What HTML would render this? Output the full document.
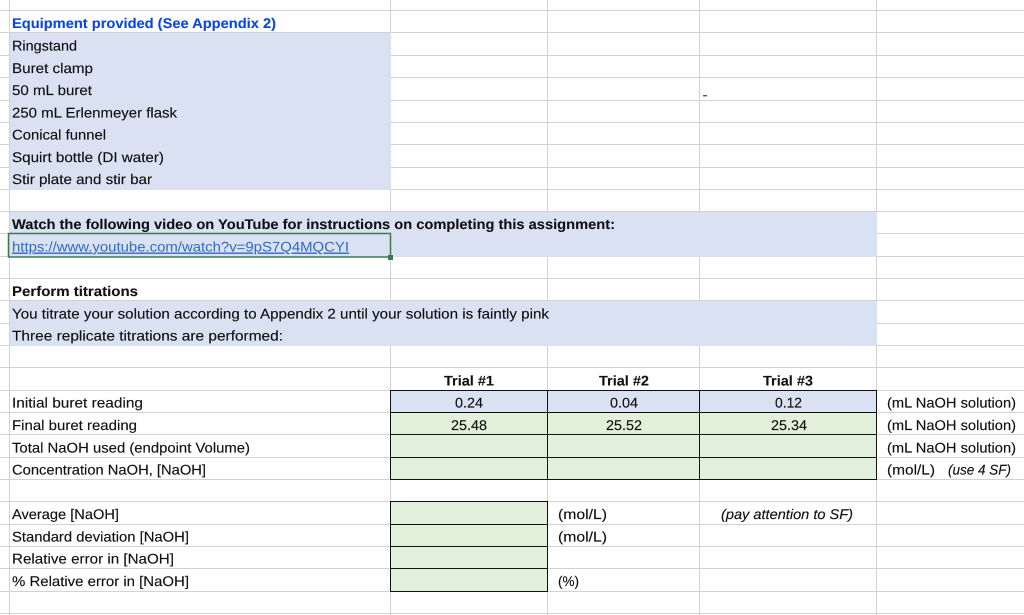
<!DOCTYPE html>
<html>
<head>
<meta charset="utf-8">
<style>
html,body{margin:0;padding:0;background:#fff;width:1024px;height:615px;overflow:hidden}
svg{display:block}
text{font-family:"Liberation Sans",sans-serif;font-size:14px;fill:#111;stroke:#111;stroke-width:.15px;text-rendering:geometricPrecision}
.b{font-weight:bold;stroke-width:.1px}
.i{font-style:italic}
</style>
</head>
<body>
<svg width="1024" height="615" viewBox="0 0 1024 615" xmlns="http://www.w3.org/2000/svg">
<!-- gridlines -->
<g stroke="#d2d2d2" stroke-width="1" shape-rendering="crispEdges">
<path d="M0 10.5H1024M0 32.5H1024M0 55.5H1024M0 77.5H1024M0 100.5H1024M0 122.5H1024M0 144.5H1024M0 167.5H1024M0 189.5H1024M0 211.5H1024M0 233.5H1024M0 256.5H1024M0 278.5H1024M0 300.5H1024M0 323.5H1024M0 345.5H1024M0 367.5H1024M0 390.5H1024M0 412.5H1024M0 434.5H1024M0 457.5H1024M0 479.5H1024M0 501.5H1024M0 524.5H1024M0 546.5H1024M0 568.5H1024M0 591.5H1024M0 613.5H1024"/>
<path d="M9.5 0V615M390.5 0V615M547.5 0V615M699.5 0V615M876.5 0V615"/>
</g>
<!-- blue fills -->
<g fill="#d9e1f2" shape-rendering="crispEdges">
<rect x="10" y="33" width="381" height="157"/>
<rect x="10" y="212" width="867" height="45"/>
<rect x="10" y="301" width="867" height="45"/>
<rect x="391" y="391" width="486" height="21"/>
</g>
<!-- green fills -->
<g fill="#e2efda" shape-rendering="crispEdges">
<rect x="391" y="413" width="486" height="66"/>
<rect x="391" y="502" width="157" height="89"/>
</g>
<!-- table borders -->
<g stroke="#111" stroke-width="1" fill="none" shape-rendering="crispEdges">
<path d="M390.5 390V480M547.5 390V480M699.5 390V480M876.5 390V480"/>
<path d="M390 390.5H877M390 412.5H877M390 434.5H877M390 457.5H877M390 479.5H877"/>
<path d="M390.5 501V592M547.5 501V592"/>
<path d="M390 501.5H548M390 524.5H548M390 546.5H548M390 568.5H548M390 591.5H548"/>
</g>
<!-- selection -->
<rect x="8.5" y="233.5" width="382" height="23.5" fill="none" stroke="#3d7a50" stroke-width="1.5"/>
<rect x="388" y="255" width="5" height="5" fill="#3d7a50"/>
<!-- dash -->
<rect x="703" y="95" width="4" height="1.4" fill="#555"/>

<!-- text -->
<text class="b" x="12" y="28" textLength="264" lengthAdjust="spacingAndGlyphs" style="fill:#0b46e0;stroke:#0b46e0">Equipment provided (See Appendix 2)</text>
<text x="12" y="50.5" textLength="65" lengthAdjust="spacingAndGlyphs">Ringstand</text>
<text x="12" y="73" textLength="81" lengthAdjust="spacingAndGlyphs">Buret clamp</text>
<text x="12" y="95" textLength="80" lengthAdjust="spacingAndGlyphs">50 mL buret</text>
<text x="12" y="117.5" textLength="165" lengthAdjust="spacingAndGlyphs">250 mL Erlenmeyer flask</text>
<text x="12" y="139.5" textLength="94" lengthAdjust="spacingAndGlyphs">Conical funnel</text>
<text x="12" y="162" textLength="152" lengthAdjust="spacingAndGlyphs">Squirt bottle (DI water)</text>
<text x="12" y="184" textLength="140" lengthAdjust="spacingAndGlyphs">Stir plate and stir bar</text>

<text class="b" x="12" y="229" textLength="603" lengthAdjust="spacingAndGlyphs">Watch the following video on YouTube for instructions on completing this assignment:</text>
<text x="12" y="251.5" textLength="337" lengthAdjust="spacingAndGlyphs" style="fill:#2f6cc4;stroke:none;text-decoration:underline">https://www.youtube.com/watch?v=9pS7Q4MQCYI</text>

<text class="b" x="12" y="296" textLength="126" lengthAdjust="spacingAndGlyphs">Perform titrations</text>
<text x="12" y="318.5" textLength="537" lengthAdjust="spacingAndGlyphs">You titrate your solution according to Appendix 2 until your solution is faintly pink</text>
<text x="12" y="340.5" textLength="271" lengthAdjust="spacingAndGlyphs">Three replicate titrations are performed:</text>

<text class="b" x="444" y="385.5" textLength="50" lengthAdjust="spacingAndGlyphs">Trial #1</text>
<text class="b" x="599" y="385.5" textLength="50" lengthAdjust="spacingAndGlyphs">Trial #2</text>
<text class="b" x="763" y="385.5" textLength="50" lengthAdjust="spacingAndGlyphs">Trial #3</text>

<text x="455" y="407.5" textLength="28" lengthAdjust="spacingAndGlyphs">0.24</text>
<text x="610" y="407.5" textLength="28" lengthAdjust="spacingAndGlyphs">0.04</text>
<text x="775" y="407.5" textLength="27" lengthAdjust="spacingAndGlyphs">0.12</text>
<text x="451" y="430" textLength="36" lengthAdjust="spacingAndGlyphs">25.48</text>
<text x="606" y="430" textLength="36" lengthAdjust="spacingAndGlyphs">25.52</text>
<text x="771" y="430" textLength="36" lengthAdjust="spacingAndGlyphs">25.34</text>

<text x="887" y="407.5" textLength="129" lengthAdjust="spacingAndGlyphs">(mL NaOH solution)</text>
<text x="887" y="430" textLength="129" lengthAdjust="spacingAndGlyphs">(mL NaOH solution)</text>
<text x="887" y="452.5" textLength="129" lengthAdjust="spacingAndGlyphs">(mL NaOH solution)</text>
<text x="887" y="474.5" textLength="48" lengthAdjust="spacingAndGlyphs">(mol/L)</text>
<text class="i" x="948" y="474.5" textLength="63" lengthAdjust="spacingAndGlyphs">(use 4 SF)</text>

<text x="12" y="407.5" textLength="131" lengthAdjust="spacingAndGlyphs">Initial buret reading</text>
<text x="12" y="430" textLength="125" lengthAdjust="spacingAndGlyphs">Final buret reading</text>
<text x="12" y="452.5" textLength="238" lengthAdjust="spacingAndGlyphs">Total NaOH used (endpoint Volume)</text>
<text x="12" y="474.5" textLength="194" lengthAdjust="spacingAndGlyphs">Concentration NaOH, [NaOH]</text>

<text x="12" y="519" textLength="107" lengthAdjust="spacingAndGlyphs">Average [NaOH]</text>
<text x="12" y="541.5" textLength="177" lengthAdjust="spacingAndGlyphs">Standard deviation [NaOH]</text>
<text x="12" y="563.5" textLength="162" lengthAdjust="spacingAndGlyphs">Relative error in [NaOH]</text>
<text x="12" y="586" textLength="177" lengthAdjust="spacingAndGlyphs">% Relative error in [NaOH]</text>

<text x="558" y="519" textLength="49" lengthAdjust="spacingAndGlyphs">(mol/L)</text>
<text x="558" y="541.5" textLength="49" lengthAdjust="spacingAndGlyphs">(mol/L)</text>
<text x="558" y="586" textLength="21" lengthAdjust="spacingAndGlyphs">(%)</text>
<text class="i" x="721" y="519" textLength="132" lengthAdjust="spacingAndGlyphs">(pay attention to SF)</text>
</svg>
</body>
</html>
